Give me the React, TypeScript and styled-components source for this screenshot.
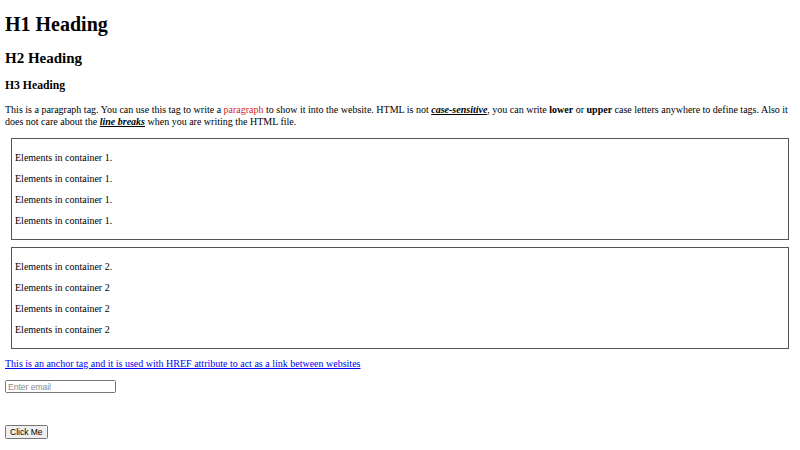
import React from "react";
import styled, { createGlobalStyle } from "styled-components";

const GlobalStyle = createGlobalStyle`
  html, body {
    margin: 0;
    padding: 0;
    background: #fff;
  }
  body {
    font-family: "Liberation Serif", "Times New Roman", serif;
    font-size: 10px;
    color: #000;
  }
`;

const Page = styled.div`
  padding: 0 5px 5px 5px;
  display: flow-root;
`;

const H1 = styled.h1`
  font-size: 20px;
  font-weight: bold;
  margin: 13.4px 0;
`;

const H2 = styled.h2`
  font-size: 15px;
  font-weight: bold;
  margin: 12.4px 0;
`;

const H3 = styled.h3`
  font-size: 11.7px;
  font-weight: bold;
  margin: 11.7px 0;
`;

const Para = styled.p`
  margin: 10px 0;
  font-size: 10px;
  line-height: 12px;
`;

const Red = styled.span`
  color: #d21f1f;
`;

const Emph = styled.em`
  font-weight: bold;
  text-decoration: underline;
`;

const Container = styled.div`
  border: 1px solid #555;
  margin: 8px 6px 7px 6px;
  padding: 3px 3px;

  & + & {
    margin-top: 7px;
  }
`;

const Item = styled.p`
  margin: 10px 0;
`;

const LinkRow = styled.div`
  margin-top: 9px;
`;

const Anchor = styled.a`
  color: #0000ee;
  text-decoration: underline;
`;

const EmailInput = styled.input`
  display: block;
  margin-top: 11px;
  width: 111px;
  height: 13.5px;
  box-sizing: border-box;
  border: 1px solid #767676;
  border-radius: 1.5px;
  padding: 0 2px;
  font-family: "Liberation Sans", Arial, sans-serif;
  font-size: 8.5px;
  &::placeholder {
    color: #8a8a8a;
  }
`;

const Button = styled.button`
  display: block;
  margin-top: 32px;
  height: 13.5px;
  box-sizing: border-box;
  padding: 0 4px;
  border: 1px solid #767676;
  border-radius: 1.5px;
  background: #efefef;
  font-family: "Liberation Sans", Arial, sans-serif;
  font-size: 8.5px;
  color: #000;
  line-height: 1;
`;

export default function App() {
  return (
    <>
      <GlobalStyle />
      <Page>
        <H1>H1 Heading</H1>
        <H2>H2 Heading</H2>
        <H3>H3 Heading</H3>
        <Para>
          This is a paragraph tag. You can use this tag to write a <Red>paragraph</Red> to show it
          into the website. HTML is not <Emph>case-sensitive</Emph>, you can write <b>lower</b> or{" "}
          <b>upper</b> case letters anywhere to define tags. Also it does not care about the{" "}
          <Emph>line breaks</Emph> when you are writing the HTML file.
        </Para>
        <Container>
          <Item>Elements in container 1.</Item>
          <Item>Elements in container 1.</Item>
          <Item>Elements in container 1.</Item>
          <Item>Elements in container 1.</Item>
        </Container>
        <Container>
          <Item>Elements in container 2.</Item>
          <Item>Elements in container 2</Item>
          <Item>Elements in container 2</Item>
          <Item>Elements in container 2</Item>
        </Container>
        <LinkRow>
          <Anchor href="#">
            This is an anchor tag and it is used with HREF attribute to act as a link between websites
          </Anchor>
        </LinkRow>
        <EmailInput type="email" placeholder="Enter email" />
        <Button>Click Me</Button>
      </Page>
    </>
  );
}
